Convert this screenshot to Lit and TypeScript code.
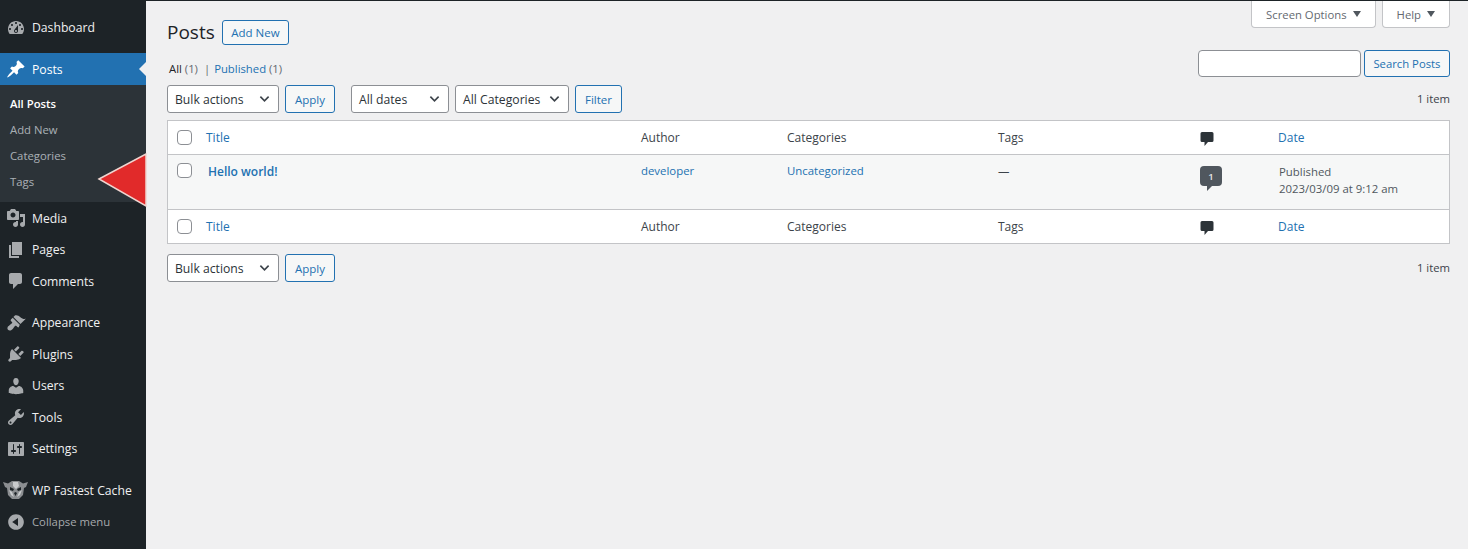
import { LitElement, html, css, svg } from "lit";
import { customElement } from "lit/decorators.js";

const ICONS: Record<string, string> = {
  dashboard:
    "M3.76 16h12.48c1.1-1.37 1.76-3.11 1.76-5 0-4.42-3.58-8-8-8s-8 3.58-8 8c0 1.89.66 3.63 1.76 5zM10 4c.55 0 1 .45 1 1s-.45 1-1 1-1-.45-1-1 .45-1 1-1zM6 6c.55 0 1 .45 1 1s-.45 1-1 1-1-.45-1-1 .45-1 1-1zm8 0c.55 0 1 .45 1 1s-.45 1-1 1-1-.45-1-1 .45-1 1-1zm-5.37 5.55L12 7v6c0 1.1-.9 2-2 2s-2-.9-2-2c0-.57.24-1.08.63-1.45zM4 10c.55 0 1 .45 1 1s-.45 1-1 1-1-.45-1-1 .45-1 1-1zm12 0c.55 0 1 .45 1 1s-.45 1-1 1-1-.45-1-1 .45-1 1-1zm-5 3c0-.55-.45-1-1-1s-1 .45-1 1 .45 1 1 1 1-.45 1-1z",
  posts:
    "M10.44 3.02l1.82-1.82 6.36 6.35-1.83 1.82c-1.05-.68-2.48-.57-3.41.36l-.75.75c-.92.93-1.04 2.35-.35 3.41l-1.83 1.82-2.41-2.41-2.8 2.79c-.42.42-3.38 2.71-3.8 2.29s1.86-3.39 2.28-3.81l2.79-2.79L4.1 9.36l1.83-1.82c1.05.69 2.48.57 3.4-.36l.75-.75c.93-.92 1.05-2.35.36-3.41z",
  media:
    "M13 11V4c0-.55-.45-1-1-1h-1.67L9 1H5L3.67 3H2c-.55 0-1 .45-1 1v7c0 .55.45 1 1 1h10c.55 0 1-.45 1-1zM7 4.5c1.38 0 2.5 1.12 2.5 2.5S8.38 9.5 7 9.5 4.5 8.38 4.5 7 5.62 4.5 7 4.5zM14 6h5v10.5c0 1.38-1.12 2.5-2.5 2.5S14 17.88 14 16.5s1.12-2.5 2.5-2.5c.17 0 .34.02.5.05V9h-3V6zm-4 8.05V13h2v3.5c0 1.38-1.12 2.5-2.5 2.5S7 17.88 7 16.5 8.12 14 9.5 14c.17 0 .34.02.5.05z",
  pages: "M6 15V2h10v13H6zm-1 1h8v2H3V5h2v11z",
  comments:
    "M5 2h9c1.1 0 2 .9 2 2v7c0 1.1-.9 2-2 2h-2l-5 5v-5H5c-1.1 0-2-.9-2-2V4c0-1.1.9-2 2-2z",
  appearance:
    "M14.48 11.06L7.41 3.99l1.5-1.5c.5-.56 2.3-.47 3.51.32 1.21.8 1.43 1.28 2.91 2.1 1.18.64 2.45 1.26 4.45.85zm-.71.71L6.7 4.7 4.93 6.47c-.39.39-.39 1.02 0 1.41l1.06 1.06c.39.39.39 1.03 0 1.42-.6.6-1.43 1.11-2.21 1.69-.35.26-.7.53-1.01.84C1.43 13.23.91 15.66 1.96 16.7c.49.49 1.13.8 1.9.8s1.66-.31 2.6-1.24c.31-.31.58-.66.84-1.01.58-.78 1.09-1.61 1.69-2.21.39-.39 1.02-.39 1.41 0l1.06 1.06c.39.39 1.02.39 1.41 0z",
  plugins:
    "M13.11 4.36L9.87 7.6 8 5.73l3.24-3.24c.35-.34 1.05-.2 1.56.32.52.51.66 1.21.31 1.55zm-8 1.77l.91-1.12 9.01 9.01-1.19.84c-.71.71-2.63 1.16-3.82 1.16H6.14L4.9 17.26c-.59.59-1.54.59-2.12 0-.59-.58-.59-1.53 0-2.12l1.24-1.24v-3.88c0-1.13.4-3.19 1.09-3.89zm7.26 3.97l3.24-3.24c.34-.35 1.04-.21 1.55.31.52.51.66 1.21.31 1.55l-3.24 3.25z",
  users:
    "M10 9.25c-2.27 0-2.73-3.44-2.73-3.44C7 4.02 7.82 2 9.97 2c2.16 0 2.98 2.02 2.71 3.81 0 0-.41 3.44-2.68 3.44zm0 2.57L12.72 10c2.39 0 4.52 2.33 4.52 4.53v2.49s-3.65 1.13-7.24 1.13c-3.65 0-7.24-1.13-7.24-1.13v-2.49c0-2.25 1.94-4.48 4.47-4.48z",
  tools:
    "M16.68 9.77c-1.34 1.34-3.3 1.67-4.95.99l-5.41 6.52c-.99.99-2.59.99-3.58 0s-.99-2.59 0-3.57l6.52-5.42c-.68-1.65-.35-3.61.99-4.95 1.28-1.28 3.12-1.62 4.72-1.06l-2.89 2.89 2.82 2.82 2.86-2.87c.53 1.58.18 3.39-1.08 4.65zM3.81 16.21c.4.39 1.04.39 1.43 0 .4-.4.4-1.04 0-1.43-.39-.4-1.03-.4-1.43 0-.39.39-.39 1.03 0 1.43z",
  settings:
    "M18 16V4c0-.55-.45-1-1-1H3c-.55 0-1 .45-1 1v12c0 .55.45 1 1 1h14c.55 0 1-.45 1-1zM8 11h1c.55 0 1 .45 1 1s-.45 1-1 1H8v1.5c0 .28-.22.5-.5.5s-.5-.22-.5-.5V13H6c-.55 0-1-.45-1-1s.45-1 1-1h1V5.5c0-.28.22-.5.5-.5s.5.22.5.5V11zm5-2h-1c-.55 0-1-.45-1-1s.45-1 1-1h1V5.5c0-.28.22-.5.5-.5s.5.22.5.5V7h1c.55 0 1 .45 1 1s-.45 1-1 1h-1v5.5c0 .28-.22.5-.5.5s-.5-.22-.5-.5V9z",
  collapse:
    "M10 2.16c4.33 0 7.84 3.51 7.84 7.84s-3.51 7.84-7.84 7.84S2.16 14.33 2.16 10 5.71 2.16 10 2.16zm2 11.72V6.12L6.18 9.97z",
};

const icon = (name: string) =>
  html`<svg class="ico" viewBox="0 0 20 20"><path fill="currentColor" fill-rule="evenodd" d=${ICONS[name]}></path></svg>`;

const cheetah = svg`<svg class="logo" viewBox="0 0 25 20">
  <path fill="#8b8e91" d="M0 2l5 1.500L9 1h7l4 2.500L25 2l-2 5-2 1-1 7-4 4H9l-4-4-1-7-2-1z"></path>
  <path fill="#c9cbcd" d="M10 2h5l1 4-3 3-3-3zM6 10l3 2 2 5-3-2zM19 10l-3 2-2 5 3-2z"></path>
  <path fill="#1d2327" d="M7 7l4 2-1 2-3-1zM18 7l-4 2 1 2 3-1zM11 13l1.500-1 1.500 1-1.500 3z"></path>
</svg>`;

const chevron = html`<svg class="chev" viewBox="0 0 12 8"><path d="M1.500 1.500 6 6l4.500-4.500" fill="none" stroke="#3c434a" stroke-width="1.800"></path></svg>`;

const bubble = html`<svg class="bubble" viewBox="0 0 14 16"><path fill="#2c3338" d="M2 1h10a1.500 1.500 0 0 1 1.500 1.500v7A1.500 1.500 0 0 1 12 11H8l-3.500 4v-4H2A1.500 1.500 0 0 1 .5 9.500v-7A1.500 1.500 0 0 1 2 1z"></path></svg>`;

@customElement("app-root")
export class AppRoot extends LitElement {
  static styles = css`
    :host {
      display: block;
      position: relative;
      height: 549px;
      overflow: hidden;
      background: #f0f0f1;
      border-top: 1px solid #1d2327;
      box-sizing: border-box;
      font-family: "Open Sans", "Noto Sans", sans-serif;
      font-size: 12px;
      color: #50575e;
    }
    .layout {
      display: flex;
      height: 100%;
    }

    /* sidebar */
    .side {
      width: 146px;
      flex: none;
      background: #1d2327;
      color: #f0f0f1;
      padding-top: 11px;
      box-sizing: border-box;
    }
    .item {
      display: flex;
      align-items: center;
      height: 31.500px;
      gap: 6px;
      padding-left: 6px;
      font-size: 12.200px;
      white-space: nowrap;
    }
    .item .ico {
      width: 20px;
      height: 20px;
      color: #a7aaad;
      flex: none;
    }
    .item.current {
      position: relative;
      background: #2271b1;
      color: #fff;
      font-weight: 500;
    }
    .item.current span {
      padding-top: 2px;
    }
    .item.current .ico {
      color: #fff;
    }
    .item.current::after {
      content: "";
      position: absolute;
      right: 0;
      top: 9px;
      border: 7px solid transparent;
      border-right-color: #f0f0f1;
      border-left-width: 0;
    }
    .gap-top {
      margin-top: 10px;
    }
    .first {
      margin-top: 9.500px;
    }
    .sub {
      background: #2c3338;
      padding: 6px 0 7px 10px;
      height: 117.750px;
      box-sizing: border-box;
      display: flex;
      flex-direction: column;
      font-size: 11.300px;
      color: rgba(240, 246, 252, 0.65);
    }
    .sub span {
      height: 26px;
      line-height: 26px;
    }
    .sub .on {
      color: #fff;
      font-weight: 600;
      margin-bottom: 0.700px;
    }
    .item.dim {
      color: #a7aaad;
      font-size: 11.300px;
    }
    .logo {
      width: 25px;
      height: 20px;
      flex: none;
      margin: 0 -2px 0 -3px;
    }

    /* content */
    .main {
      flex: 1;
      min-width: 0;
      padding: 0 18px 0 21px;
    }
    .tabs {
      display: flex;
      justify-content: flex-end;
      gap: 6px;
    }
    .tab {
      display: flex;
      align-items: center;
      gap: 6px;
      height: 27px;
      padding: 0 14px;
      background: #fff;
      border: 1px solid #c3c4c7;
      border-top: none;
      border-radius: 0 0 4px 4px;
      box-sizing: border-box;
      color: #646970;
      font-size: 11.300px;
    }
    .tab i {
      width: 0;
      height: 0;
      border: 4px solid transparent;
      border-top: 6px solid #50575e;
      border-bottom: none;
    }
    .head {
      display: flex;
      align-items: center;
      gap: 7px;
      margin-top: -9px;
      height: 26px;
    }
    h1 {
      margin: 0;
      font-size: 19px;
      font-weight: 400;
      color: #1d2327;
    }
    .btn {
      display: flex;
      align-items: center;
      justify-content: center;
      height: 28px;
      box-sizing: border-box;
      padding: 0 9px;
      border: 1px solid #2271b1;
      border-radius: 3px;
      background: #f6f7f7;
      color: #2271b1;
      font-size: 11.500px;
      white-space: nowrap;
    }
    .head .btn {
      height: 25px;
      padding: 0 8.500px;
    }
    .search-line {
      display: flex;
      justify-content: space-between;
      align-items: flex-start;
    }
    .views {
      margin: 16px 0 0 2px;
      font-size: 11.300px;
      color: #646970;
    }
    .views b {
      color: #1d2327;
      font-weight: 500;
    }
    .views a {
      color: #2271b1;
    }
    .sep {
      margin: 0 4px 0 6px;
    }
    .search {
      display: flex;
      gap: 3px;
      margin-top: 5px;
    }
    .search .btn {
      font-size: 11.300px;
      height: 27px;
      padding: 0 8.500px;
    }
    .input {
      width: 163px;
      height: 27px;
      background: #fff;
      border: 1px solid #8c8f94;
      border-radius: 4px;
      box-sizing: border-box;
    }
    .bar {
      display: flex;
      align-items: center;
      gap: 6px;
      margin-top: 8px;
      height: 28px;
      font-size: 11.300px;
    }
    .bar.bottom {
      margin-top: 10px;
    }
    .select {
      display: flex;
      align-items: center;
      justify-content: space-between;
      height: 28px;
      box-sizing: border-box;
      padding: 0 8px 0 7px;
      background: #fff;
      border: 1px solid #8c8f94;
      border-radius: 3px;
      color: #2c3338;
      font-size: 12.200px;
      white-space: nowrap;
    }
    .chev {
      width: 11px;
      height: 8px;
      flex: none;
    }
    .w-bulk {
      width: 112px;
    }
    .w-dates {
      width: 98px;
      margin-left: 10px;
    }
    .w-cats {
      width: 114px;
    }
    .count {
      margin: -2px 0 0 auto;
      color: #3c434a;
    }

    /* table */
    .table {
      margin-top: 7px;
      border: 1px solid #c3c4c7;
      background: #fff;
      font-size: 12px;
      color: #3c434a;
    }
    .row {
      display: grid;
      grid-template-columns: 38px 435px 146px 211px 202px 78px 1fr;
      height: 33px;
      align-items: center;
    }
    .row.body {
      height: 56px;
      align-items: start;
      background: #f6f7f7;
      border-top: 1px solid #c3c4c7;
      border-bottom: 1px solid #c3c4c7;
      padding-top: 8px;
      box-sizing: border-box;
      font-size: 11.400px;
    }
    .check {
      width: 15px;
      height: 15px;
      margin-left: 9px;
      background: #fff;
      border: 1px solid #8c8f94;
      border-radius: 4px;
      box-sizing: border-box;
    }
    .row a {
      color: #2271b1;
    }
    .row .strong {
      font-size: 12px;
      font-weight: 600;
      margin-left: 2px;
    }
    .bubble {
      width: 14px;
      height: 16px;
      display: block;
      margin-top: 2px;
    }
    .badge {
      position: relative;
      width: 22px;
      height: 20px;
      margin-top: 3px;
      border-radius: 4px;
      background: #50575e;
      color: #e6e7e8;
      font-size: 9.500px;
      font-weight: 600;
      display: flex;
      align-items: center;
      justify-content: center;
    }
    .badge::after {
      content: "";
      position: absolute;
      left: 7px;
      bottom: -5px;
      border-top: 5px solid #50575e;
      border-right: 5px solid transparent;
    }
    .date {
      line-height: 17px;
      margin-left: 1px;
      color: #50575e;
    }

    /* annotation drawn over the screenshot */
    .arrow {
      position: absolute;
      left: 97px;
      top: 151px;
      width: 50px;
      height: 56px;
    }
  `;

  private _nav(name: string, label: string, cls = "") {
    return html`<div class="item ${cls}">${icon(name)}<span>${label}</span></div>`;
  }

  private _row() {
    return html`
      <div class="row">
        <div class="check"></div>
        <a>Title</a>
        <span>Author</span>
        <span>Categories</span>
        <span>Tags</span>
        ${bubble}
        <a>Date</a>
      </div>
    `;
  }

  private _bulk() {
    return html`
      <div class="select w-bulk">Bulk actions ${chevron}</div>
      <div class="btn">Apply</div>
    `;
  }

  render() {
    return html`
      <div class="layout">
        <nav class="side">
          ${this._nav("dashboard", "Dashboard")}
          <div class="item current first">${icon("posts")}<span>Posts</span></div>
          <div class="sub">
            <span class="on">All Posts</span>
            <span>Add New</span>
            <span>Categories</span>
            <span>Tags</span>
          </div>
          ${this._nav("media", "Media")}
          ${this._nav("pages", "Pages")}
          ${this._nav("comments", "Comments")}
          ${this._nav("appearance", "Appearance", "gap-top")}
          ${this._nav("plugins", "Plugins")}
          ${this._nav("users", "Users")}
          ${this._nav("tools", "Tools")}
          ${this._nav("settings", "Settings")}
          <div class="item gap-top">${cheetah}<span>WP Fastest Cache</span></div>
          ${this._nav("collapse", "Collapse menu", "dim")}
        </nav>
        <main class="main">
          <div class="tabs">
            <div class="tab">Screen Options <i></i></div>
            <div class="tab">Help <i></i></div>
          </div>
          <div class="head">
            <h1>Posts</h1>
            <div class="btn">Add New</div>
          </div>
          <div class="search-line">
            <div class="views"><b>All</b> (1)<span class="sep">|</span><a>Published</a> (1)</div>
            <div class="search">
              <div class="input"></div>
              <div class="btn">Search Posts</div>
            </div>
          </div>
          <div class="bar">
            ${this._bulk()}
            <div class="select w-dates">All dates ${chevron}</div>
            <div class="select w-cats">All Categories ${chevron}</div>
            <div class="btn">Filter</div>
            <span class="count">1 item</span>
          </div>
          <div class="table">
            ${this._row()}
            <div class="row body">
              <div class="check"></div>
              <a class="strong">Hello world!</a>
              <a>developer</a>
              <a>Uncategorized</a>
              <span>—</span>
              <div class="badge">1</div>
              <div class="date">Published<br />2023/03/09 at 9:12 am</div>
            </div>
            ${this._row()}
          </div>
          <div class="bar bottom">
            ${this._bulk()}
            <span class="count">1 item</span>
          </div>
        </main>
      </div>
      <svg class="arrow" viewBox="0 0 50 56">
        <path d="M2 27 49 2v52z" fill="#e12a2a" stroke="#f0d5d0" stroke-width="1.500"></path>
      </svg>
    `;
  }
}
